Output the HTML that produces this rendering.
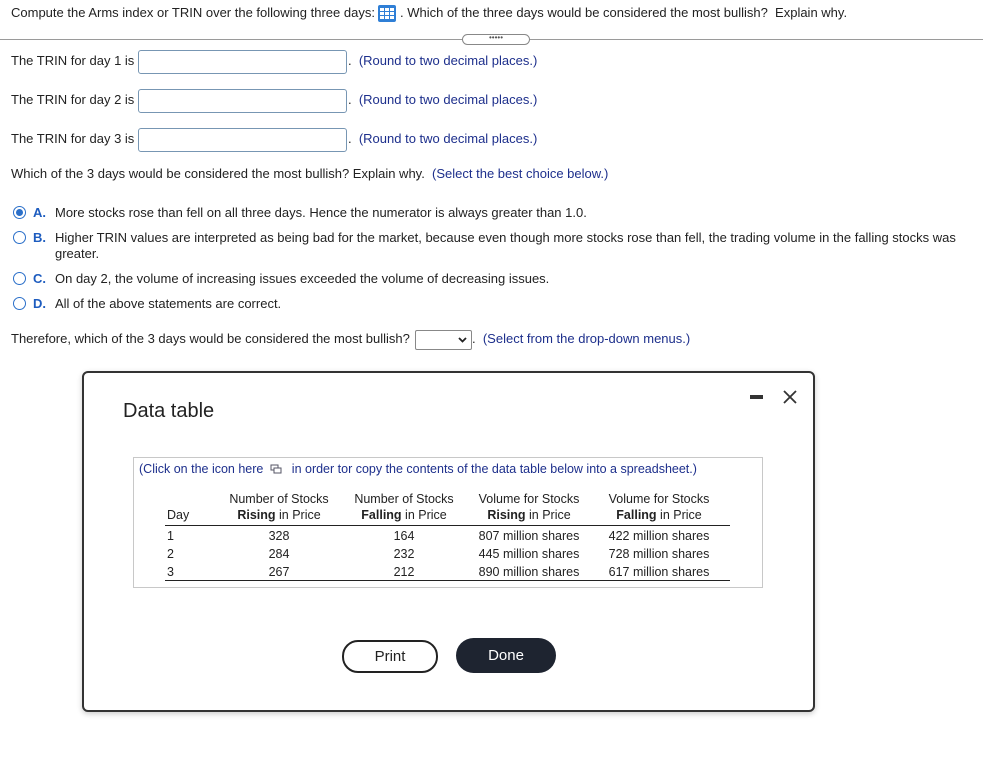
<!DOCTYPE html>
<html><head><meta charset="utf-8"><style>
body{margin:0;width:983px;height:769px;background:#fff;font-family:"Liberation Sans",Arial,sans-serif;font-size:13px;color:#222;position:relative;overflow:hidden}
.a{position:absolute;white-space:nowrap;line-height:16px}
.blue{color:#1d2f8c}
.inp{position:absolute;left:138px;width:207px;height:22px;border:1px solid #7796b3;border-radius:3px;background:#fff}
.radio{position:absolute;left:13px;width:11px;height:11px;border:1px solid #2a6fc9;border-radius:50%}
.lt{position:absolute;left:33px;color:#1d5cbf;font-weight:bold;line-height:16px}
.tx{position:absolute;left:55px;line-height:16px}
.th{position:absolute;text-align:center;line-height:16px;white-space:nowrap;font-size:12.5px}
</style></head><body>
<div class="a" style="left:11px;top:5px">Compute the Arms index or TRIN over the following three days: </div>
<svg style="position:absolute;left:378px;top:5px" width="18" height="17" viewBox="0 0 18 17"><rect x="0" y="0" width="18" height="17" rx="2" fill="#2f7fd6"/><g fill="#fff"><rect x="2" y="3" width="4" height="3"/><rect x="7" y="3" width="4" height="3"/><rect x="12" y="3" width="4" height="3"/><rect x="2" y="7" width="4" height="3"/><rect x="7" y="7" width="4" height="3"/><rect x="12" y="7" width="4" height="3"/><rect x="2" y="11" width="4" height="3"/><rect x="7" y="11" width="4" height="3"/><rect x="12" y="11" width="4" height="3"/></g></svg>
<div class="a" style="left:400px;top:5px">. Which of the three days would be considered the most bullish? &nbsp;Explain why.</div>
<div style="position:absolute;left:0;top:39px;width:983px;height:1px;background:#9a9a9a"></div>
<div style="position:absolute;left:462px;top:34px;width:66px;height:9px;border:1px solid #888;border-radius:6px;background:#fff;font-size:8px;line-height:6px;text-align:center;color:#555">•••••</div>

<div class="a" style="left:11px;top:53px">The TRIN for day 1 is</div><div class="inp" style="top:50px"></div><div class="a" style="left:348px;top:53px">. &nbsp;<span class="blue">(Round to two decimal places.)</span></div>
<div class="a" style="left:11px;top:92px">The TRIN for day 2 is</div><div class="inp" style="top:89px"></div><div class="a" style="left:348px;top:92px">. &nbsp;<span class="blue">(Round to two decimal places.)</span></div>
<div class="a" style="left:11px;top:131px">The TRIN for day 3 is</div><div class="inp" style="top:128px"></div><div class="a" style="left:348px;top:131px">. &nbsp;<span class="blue">(Round to two decimal places.)</span></div>

<div class="a" style="left:11px;top:166px">Which of the 3 days would be considered the most bullish? Explain why. &nbsp;<span class="blue">(Select the best choice below.)</span></div>

<div class="radio" style="top:206px"><div style="position:absolute;left:2px;top:2px;width:7px;height:7px;border-radius:50%;background:#2a6fc9"></div></div>
<div class="lt" style="top:205px">A.</div><div class="tx" style="top:205px">More stocks rose than fell on all three days. Hence the numerator is always greater than 1.0.</div>
<div class="radio" style="top:231px"></div>
<div class="lt" style="top:230px">B.</div><div class="tx" style="top:230px;width:915px">Higher TRIN values are interpreted as being bad for the market, because even though more stocks rose than fell, the trading volume in the falling stocks was greater.</div>
<div class="radio" style="top:272px"></div>
<div class="lt" style="top:271px">C.</div><div class="tx" style="top:271px">On day 2, the volume of increasing issues exceeded the volume of decreasing issues.</div>
<div class="radio" style="top:297px"></div>
<div class="lt" style="top:296px">D.</div><div class="tx" style="top:296px">All of the above statements are correct.</div>

<div class="a" style="left:11px;top:331px">Therefore, which of the 3 days would be considered the most bullish?</div>
<div style="position:absolute;left:415px;top:330px;width:55px;height:18px;border:1px solid #888;border-radius:2px"><svg style="position:absolute;right:4px;top:6px" width="9" height="6" viewBox="0 0 9 6"><path d="M1 1L4.5 4.5L8 1" stroke="#222" stroke-width="1.8" fill="none"/></svg></div>
<div class="a" style="left:472px;top:331px">. &nbsp;<span class="blue">(Select from the drop-down menus.)</span></div>

<div style="position:absolute;left:82px;top:371px;width:729px;height:337px;border:2px solid #333;border-radius:6px;background:#fff;box-shadow:0 2px 6px rgba(0,0,0,.2)"></div>
<div class="a" style="left:123px;top:400px;font-size:20px;line-height:22px">Data table</div>
<div style="position:absolute;left:750px;top:395px;width:13px;height:4px;background:#333"></div>
<svg style="position:absolute;left:782px;top:389px" width="16" height="16" viewBox="0 0 16 16"><path d="M2 2L14 14M14 2L2 14" stroke="#333" stroke-width="1.8"/></svg>

<div style="position:absolute;left:133px;top:457px;width:628px;height:129px;border:1px solid #c8c8c8"></div>
<div class="a blue" style="left:139px;top:461px;font-size:12.5px">(Click on the icon here <svg width="12" height="10" viewBox="0 0 12 10" style="vertical-align:-1px;margin:0 3px"><rect x="1" y="1" width="7" height="5" fill="none" stroke="#556" stroke-width="1"/><rect x="4" y="4" width="7" height="5" fill="#fff" stroke="#556" stroke-width="1"/></svg>&nbsp; in order tor copy the contents of the data table below into a spreadsheet.)</div>

<div class="th" style="left:167px;top:507px">Day</div>
<div class="th" style="left:219px;width:120px;top:491px">Number of Stocks<br><b>Rising</b> in Price</div>
<div class="th" style="left:344px;width:120px;top:491px">Number of Stocks<br><b>Falling</b> in Price</div>
<div class="th" style="left:469px;width:120px;top:491px">Volume for Stocks<br><b>Rising</b> in Price</div>
<div class="th" style="left:599px;width:120px;top:491px">Volume for Stocks<br><b>Falling</b> in Price</div>
<div style="position:absolute;left:165px;top:525px;width:565px;height:1px;background:#222"></div>
<div class="th" style="left:167px;top:527px;text-align:left;line-height:18px">1<br>2<br>3</div>
<div class="th" style="left:219px;width:120px;top:527px;line-height:18px">328<br>284<br>267</div>
<div class="th" style="left:344px;width:120px;top:527px;line-height:18px">164<br>232<br>212</div>
<div class="th" style="left:469px;width:120px;top:527px;line-height:18px">807 million shares<br>445 million shares<br>890 million shares</div>
<div class="th" style="left:599px;width:120px;top:527px;line-height:18px">422 million shares<br>728 million shares<br>617 million shares</div>
<div style="position:absolute;left:165px;top:580px;width:565px;height:1px;background:#222"></div>

<div style="position:absolute;left:342px;top:640px;width:92px;height:29px;border:2px solid #222;border-radius:16px;text-align:center;line-height:29px;font-size:15px;color:#222">Print</div>
<div style="position:absolute;left:456px;top:638px;width:100px;height:35px;background:#1e2430;border-radius:18px;text-align:center;line-height:35px;font-size:15px;color:#fff">Done</div>
</body></html>
